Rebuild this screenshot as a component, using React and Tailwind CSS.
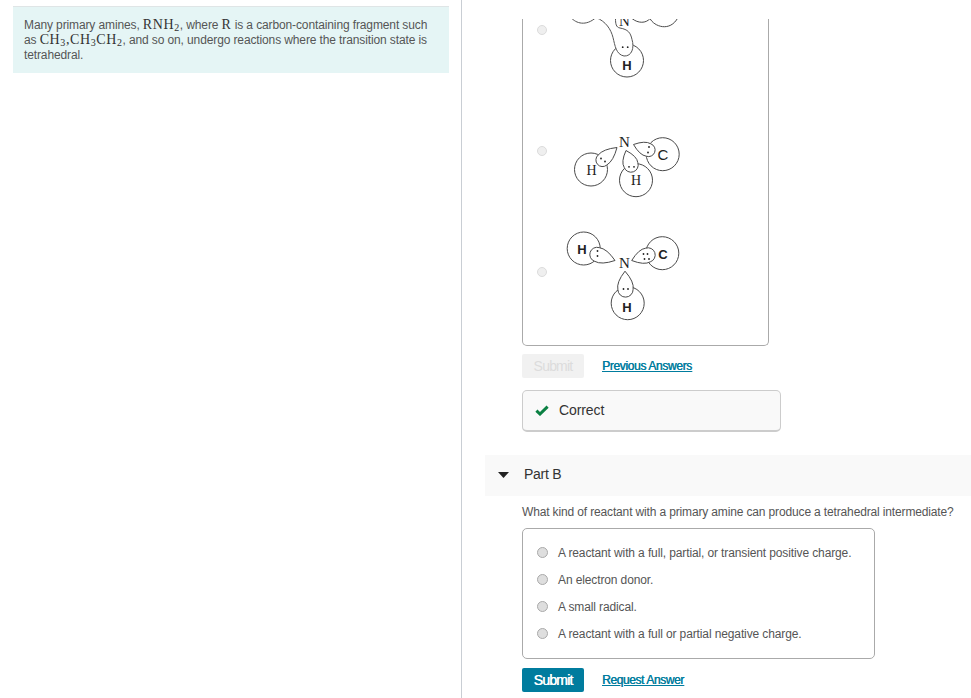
import React from "react";

function Lobe({ tip, c, r }) {
  const dx = c[0] - tip[0], dy = c[1] - tip[1];
  const l = Math.hypot(dx, dy);
  const ux = dx / l, uy = dy / l, px = -uy, py = ux;
  const a = [c[0] + px * r, c[1] + py * r];
  const b = [c[0] - px * r, c[1] - py * r];
  const m = [tip[0] + dx * 0.6, tip[1] + dy * 0.6];
  const k = r * 1.2;
  const d = `M${tip[0]} ${tip[1]} Q${m[0] + px * k} ${m[1] + py * k} ${a[0]} ${a[1]} A${r} ${r} 0 1 0 ${b[0]} ${b[1]} Q${m[0] - px * k} ${m[1] - py * k} ${tip[0]} ${tip[1]}Z`;
  return <path d={d} fill="#fff" stroke="#4a4a4a" strokeWidth="1" />;
}

function Dots({ pts }) {
  return pts.map((p, i) => <circle key={i} cx={p[0]} cy={p[1]} r="0.9" fill="#222" />);
}

function Atom({ x, y, r = 16.5 }) {
  return <circle cx={x} cy={y} r={r} fill="#fff" stroke="#4a4a4a" strokeWidth="1" />;
}

function Label({ x, y, children, serif }) {
  return (
    <text
      x={x}
      y={y}
      textAnchor="middle"
      fontSize={serif ? 14 : 13}
      fontWeight={serif ? 400 : 700}
      fill="#222"
      fontFamily={serif ? "'Liberation Serif', serif" : "'Liberation Sans', sans-serif"}
    >
      {children}
    </text>
  );
}

function Mol1() {
  return (
    <svg viewBox="560 -30.5 130 121" className="w-[130px] h-[121px] shrink-0">
      <path d="M571 18 C576 24 586 27 596 18" fill="none" stroke="#555" strokeWidth="1" />
      <path d="M632 19 C638 24 646 24 650 19 C654 27 670 33 678 18" fill="none" stroke="#4a4a4a" strokeWidth="1" />
      <Atom x={627} y={61} />
      <path d="M596 18 C606 22 611 30 613 38 C615 46 616 55 624 56.5 C632 57 634.5 48 632 40 C630.5 33 628 30 620 28.5 C616 28 615.5 24 615.5 19" fill="#fff" stroke="#555" strokeWidth="1" />
      <Dots pts={[[622.7, 47.7], [627.7, 47.7]]} />
      <Label x={627} y={70}>H</Label>
      <text x={624.5} y={26} textAnchor="middle" fontSize="15" fill="#222" fontFamily="'Liberation Serif', serif">N</text>
    </svg>
  );
}

function Mol2() {
  return (
    <svg viewBox="560 90.5 130 121" className="w-[130px] h-[121px] shrink-0">
      <Atom x={591} y={170} />
      <Atom x={662.7} y={154.7} />
      <Atom x={636} y={180.7} />
      <Lobe tip={[617, 148]} c={[602.5, 160.5]} r={6.6} />
      <Lobe tip={[633.5, 145]} c={[648.5, 150.5]} r={6.6} />
      <Lobe tip={[626, 151]} c={[631, 165.5]} r={7.2} />
      <Dots pts={[[601, 159], [605, 162], [649, 147.5], [648, 153], [629, 167.3], [634, 167.3]]} />
      <Label x={591.5} y={175} serif>H</Label>
      <Label x={636} y={185.5} serif>H</Label>
      <text x={663} y={160} textAnchor="middle" fontSize="15" fill="#222" fontFamily="'Liberation Sans', sans-serif">C</text>
      <text x={624.5} y={147.5} textAnchor="middle" fontSize="15" fill="#222" fontFamily="'Liberation Serif', serif">N</text>
    </svg>
  );
}

function Mol3() {
  return (
    <svg viewBox="560 211.5 130 121" className="w-[130px] h-[121px] shrink-0">
      <Atom x={583.7} y={249} />
      <Atom x={662.3} y={253.7} />
      <Atom x={627.7} y={303.7} />
      <Lobe tip={[615, 261]} c={[597, 255]} r={7.2} />
      <Lobe tip={[631.7, 261]} c={[648, 255.5]} r={7.2} />
      <Lobe tip={[625, 271.7]} c={[625.5, 290]} r={7.6} />
      <Dots pts={[[597.5, 251.5], [597.5, 256.5], [643.5, 254.5], [647.5, 254.5], [644.5, 259.5], [649, 259.5], [623.5, 289.5], [628, 289.5]]} />
      <Label x={582} y={254.5}>H</Label>
      <Label x={627} y={312}>H</Label>
      <Label x={663} y={259}>C</Label>
      <text x={624.5} y={268.5} textAnchor="middle" fontSize="15" fill="#222" fontFamily="'Liberation Serif', serif">N</text>
    </svg>
  );
}

function M({ children }) {
  return <span className="font-['Liberation_Serif',serif] text-[14px] leading-none tracking-[0.6px] text-[#333]">{children}</span>;
}

function Sub({ children }) {
  return <sub className="bottom-0 text-[10px] leading-none align-[-2px] font-['Liberation_Serif',serif]">{children}</sub>;
}

function ImageRow({ children }) {
  return (
    <div className="flex h-[121px] items-center pl-[14px]">
      <span className="w-[10px] h-[10px] shrink-0 rounded-full bg-[#efefef] border border-[#dcdcdc]" />
      <div className="ml-[13px]">{children}</div>
    </div>
  );
}

const answers = [
  "A reactant with a full, partial, or transient positive charge.",
  "An electron donor.",
  "A small radical.",
  "A reactant with a full or partial negative charge.",
];

export default function App() {
  return (
    <div className="flex h-[698px] w-[971px] overflow-hidden bg-white font-['Liberation_Sans',Arial,sans-serif]">
      <div className="w-[462px] shrink-0 border-r border-[#c9ced4] pl-[13px] pt-[6px]">
        <div className="w-[436px] h-[67px] bg-[#e5f5f5] border-t border-[#dfe5e6] px-[11px] pt-[11px] text-[12px] leading-[14.5px] tracking-[-0.12px] text-[#555]">
          Many primary amines, <M>RNH<Sub>2</Sub></M>, where <M>R</M> is a carbon-containing fragment such as <M>CH<Sub>3</Sub>,CH<Sub>3</Sub>CH<Sub>2</Sub></M>, and so on, undergo reactions where the transition state is tetrahedral.
        </div>
      </div>

      <div className="flex-1 min-w-0 pt-[19px] pl-[23px]">
        <div className="ml-[37px] w-[247px] h-[327px] overflow-hidden border-x border-b border-[#aaa] rounded-b-[5px]">
          <div className="mt-[-50px]">
            <ImageRow><Mol1 /></ImageRow>
            <ImageRow><Mol2 /></ImageRow>
            <ImageRow><Mol3 /></ImageRow>
          </div>
        </div>

        <div className="ml-[37px] mt-[8px] flex items-center h-[24px]">
          <span className="flex items-center justify-center w-[62px] h-[24px] rounded-[2px] bg-[#f1f1f1] text-[#dcdcdc] text-[14px] tracking-[-0.8px]">Submit</span>
          <a className="ml-[18px] text-[12px] tracking-[-0.35px] text-[#007c9e] underline [text-shadow:0.4px_0_0_#007c9e]">Previous Answers</a>
        </div>

        <div className="ml-[37px] mt-[12px] flex items-center w-[259px] h-[42px] rounded-[5px] border border-[#ccc] border-b-2 bg-[#f9f9f9] pl-[12px]">
          <svg viewBox="0 0 14 11" className="w-[14px] h-[11px]">
            <path d="M1.4 5.6 L5 9 L12.6 1.6" fill="none" stroke="#0b8043" strokeWidth="3" />
          </svg>
          <span className="ml-[10px] text-[14px] tracking-[-0.1px] text-[#333]">Correct</span>
        </div>

        <div className="mt-[23px] flex items-center h-[41px] pb-[2px] bg-[#f9f9f9]">
          <svg viewBox="0 0 11 6" className="ml-[13px] w-[11px] h-[6px]">
            <path d="M0 0 H11 L5.5 6 Z" fill="#222" />
          </svg>
          <span className="ml-[15px] text-[14px] tracking-[-0.25px] text-[#333]">Part B</span>
        </div>

        <p className="ml-[37px] mt-[9px] text-[12px] leading-[14px] tracking-[-0.146px] text-[#555] whitespace-nowrap">What kind of reactant with a primary amine can produce a tetrahedral intermediate?</p>

        <div className="ml-[37px] mt-[9px] w-[353px] h-[131px] rounded-[5px] border border-[#aaa] pt-[10px] pl-[14px]">
          {answers.map((a) => (
            <div key={a} className="flex items-center h-[27px]">
              <span className="w-[11px] h-[11px] rounded-full bg-[#dedede] border border-[#aaa]" />
              <span className="ml-[10px] text-[12px] tracking-[-0.12px] text-[#555]">{a}</span>
            </div>
          ))}
        </div>

        <div className="ml-[37px] mt-[9px] flex items-center h-[24px]">
          <span className="flex items-center justify-center w-[62px] h-[24px] rounded-[2px] bg-[#007c9e] text-white text-[14px] tracking-[-0.8px] [text-shadow:0.4px_0_0_#fff]">Submit</span>
          <a className="ml-[18px] text-[12px] tracking-[-0.4px] text-[#007c9e] underline [text-shadow:0.4px_0_0_#007c9e]">Request Answer</a>
        </div>
      </div>
    </div>
  );
}
